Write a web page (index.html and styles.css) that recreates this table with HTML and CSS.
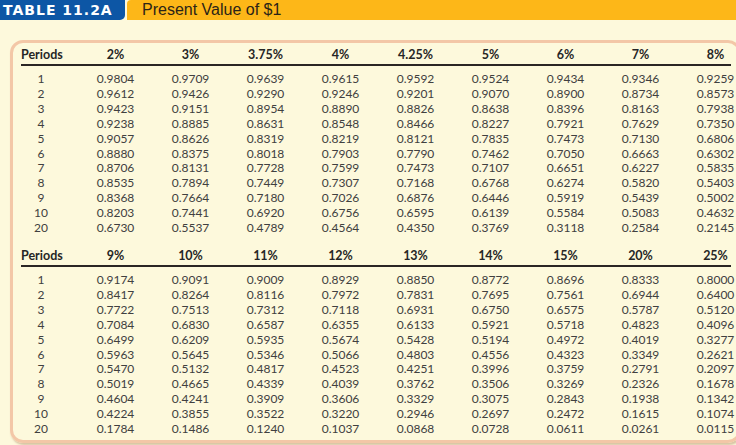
FILE: index.html
```html
<!DOCTYPE html>
<html>
<head>
<meta charset="utf-8">
<link rel="stylesheet" href="styles.css">
</head>
<body>
<div class="banner">
  <div class="tag">TABLE 11.2A</div>
  <div class="title">Present Value of $1</div>
</div>
<div class="card">
  <div class="section">
    <div class="row head"><span>Periods</span><span>2%</span><span>3%</span><span>3.75%</span><span>4%</span><span>4.25%</span><span>5%</span><span>6%</span><span>7%</span><span>8%</span></div>
    <div class="rows">
      <div class="row"><span>1</span><span>0.9804</span><span>0.9709</span><span>0.9639</span><span>0.9615</span><span>0.9592</span><span>0.9524</span><span>0.9434</span><span>0.9346</span><span>0.9259</span></div>
      <div class="row"><span>2</span><span>0.9612</span><span>0.9426</span><span>0.9290</span><span>0.9246</span><span>0.9201</span><span>0.9070</span><span>0.8900</span><span>0.8734</span><span>0.8573</span></div>
      <div class="row"><span>3</span><span>0.9423</span><span>0.9151</span><span>0.8954</span><span>0.8890</span><span>0.8826</span><span>0.8638</span><span>0.8396</span><span>0.8163</span><span>0.7938</span></div>
      <div class="row"><span>4</span><span>0.9238</span><span>0.8885</span><span>0.8631</span><span>0.8548</span><span>0.8466</span><span>0.8227</span><span>0.7921</span><span>0.7629</span><span>0.7350</span></div>
      <div class="row"><span>5</span><span>0.9057</span><span>0.8626</span><span>0.8319</span><span>0.8219</span><span>0.8121</span><span>0.7835</span><span>0.7473</span><span>0.7130</span><span>0.6806</span></div>
      <div class="row"><span>6</span><span>0.8880</span><span>0.8375</span><span>0.8018</span><span>0.7903</span><span>0.7790</span><span>0.7462</span><span>0.7050</span><span>0.6663</span><span>0.6302</span></div>
      <div class="row"><span>7</span><span>0.8706</span><span>0.8131</span><span>0.7728</span><span>0.7599</span><span>0.7473</span><span>0.7107</span><span>0.6651</span><span>0.6227</span><span>0.5835</span></div>
      <div class="row"><span>8</span><span>0.8535</span><span>0.7894</span><span>0.7449</span><span>0.7307</span><span>0.7168</span><span>0.6768</span><span>0.6274</span><span>0.5820</span><span>0.5403</span></div>
      <div class="row"><span>9</span><span>0.8368</span><span>0.7664</span><span>0.7180</span><span>0.7026</span><span>0.6876</span><span>0.6446</span><span>0.5919</span><span>0.5439</span><span>0.5002</span></div>
      <div class="row"><span>10</span><span>0.8203</span><span>0.7441</span><span>0.6920</span><span>0.6756</span><span>0.6595</span><span>0.6139</span><span>0.5584</span><span>0.5083</span><span>0.4632</span></div>
      <div class="row"><span>20</span><span>0.6730</span><span>0.5537</span><span>0.4789</span><span>0.4564</span><span>0.4350</span><span>0.3769</span><span>0.3118</span><span>0.2584</span><span>0.2145</span></div>
    </div>
  </div>
  <div class="section second">
    <div class="row head"><span>Periods</span><span>9%</span><span>10%</span><span>11%</span><span>12%</span><span>13%</span><span>14%</span><span>15%</span><span>20%</span><span>25%</span></div>
    <div class="rows">
      <div class="row"><span>1</span><span>0.9174</span><span>0.9091</span><span>0.9009</span><span>0.8929</span><span>0.8850</span><span>0.8772</span><span>0.8696</span><span>0.8333</span><span>0.8000</span></div>
      <div class="row"><span>2</span><span>0.8417</span><span>0.8264</span><span>0.8116</span><span>0.7972</span><span>0.7831</span><span>0.7695</span><span>0.7561</span><span>0.6944</span><span>0.6400</span></div>
      <div class="row"><span>3</span><span>0.7722</span><span>0.7513</span><span>0.7312</span><span>0.7118</span><span>0.6931</span><span>0.6750</span><span>0.6575</span><span>0.5787</span><span>0.5120</span></div>
      <div class="row"><span>4</span><span>0.7084</span><span>0.6830</span><span>0.6587</span><span>0.6355</span><span>0.6133</span><span>0.5921</span><span>0.5718</span><span>0.4823</span><span>0.4096</span></div>
      <div class="row"><span>5</span><span>0.6499</span><span>0.6209</span><span>0.5935</span><span>0.5674</span><span>0.5428</span><span>0.5194</span><span>0.4972</span><span>0.4019</span><span>0.3277</span></div>
      <div class="row"><span>6</span><span>0.5963</span><span>0.5645</span><span>0.5346</span><span>0.5066</span><span>0.4803</span><span>0.4556</span><span>0.4323</span><span>0.3349</span><span>0.2621</span></div>
      <div class="row"><span>7</span><span>0.5470</span><span>0.5132</span><span>0.4817</span><span>0.4523</span><span>0.4251</span><span>0.3996</span><span>0.3759</span><span>0.2791</span><span>0.2097</span></div>
      <div class="row"><span>8</span><span>0.5019</span><span>0.4665</span><span>0.4339</span><span>0.4039</span><span>0.3762</span><span>0.3506</span><span>0.3269</span><span>0.2326</span><span>0.1678</span></div>
      <div class="row"><span>9</span><span>0.4604</span><span>0.4241</span><span>0.3909</span><span>0.3606</span><span>0.3329</span><span>0.3075</span><span>0.2843</span><span>0.1938</span><span>0.1342</span></div>
      <div class="row"><span>10</span><span>0.4224</span><span>0.3855</span><span>0.3522</span><span>0.3220</span><span>0.2946</span><span>0.2697</span><span>0.2472</span><span>0.1615</span><span>0.1074</span></div>
      <div class="row"><span>20</span><span>0.1784</span><span>0.1486</span><span>0.1240</span><span>0.1037</span><span>0.0868</span><span>0.0728</span><span>0.0611</span><span>0.0261</span><span>0.0115</span></div>
    </div>
  </div>
</div>
</body>
</html>
```
FILE: styles.css
```css
html, body {
  margin: 0;
  padding: 0;
}
body {
  width: 736px;
  height: 445px;
  overflow: hidden;
  background: #fdf9dc;
  font-family: "Lato", "Liberation Sans", sans-serif;
}
.banner {
  display: flex;
  height: 20px;
  gap: 2px;
}
.tag {
  width: 125px;
  background: #0d56a5;
  color: #fff;
  font-family: "DejaVu Sans", sans-serif;
  font-weight: bold;
  font-size: 14px;
  letter-spacing: 1px;
  line-height: 20px;
  padding-left: 3px;
  box-sizing: border-box;
  border-bottom-right-radius: 5px;
}
.title {
  flex: 1;
  background: #fdb718;
  color: #2b2417;
  font-family: "Liberation Sans", sans-serif;
  font-size: 16px;
  line-height: 19px;
  padding-left: 15px;
  border-top-left-radius: 4px;
}
.card {
  margin-top: 20px;
  margin-left: 10px;
  width: 731px;
  height: 403px;
  box-sizing: border-box;
  border: 3px solid #f3c7a7;
  border-radius: 13px;
  box-shadow: 1px 2px 2px rgba(150, 100, 60, 0.35);
  padding: 4px 0 0 8px;
}
.section {
  width: 710px;
}
.section.second {
  margin-top: 12px;
}
.row {
  display: grid;
  grid-template-columns: 57px repeat(9, 75px);
  line-height: 14.9px;
  font-size: 12px;
  color: #404040;
  white-space: nowrap;
}
.row span {
  text-align: center;
}
.row span:first-child {
  padding-right: 17px;
}
.head {
  line-height: 16px;
  font-size: 12.5px;
  font-weight: bold;
  color: #262626;
  padding-bottom: 1px;
  border-bottom: 2px solid #2a2624;
}
.rows {
  padding-top: 6px;
}
```
